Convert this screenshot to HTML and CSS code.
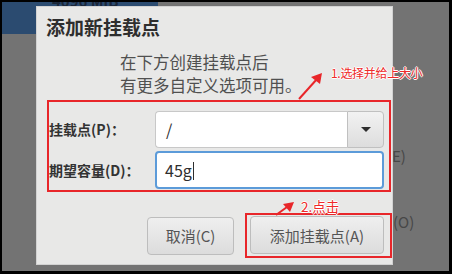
FILE: index.html
```html
<!DOCTYPE html>
<html lang="zh-CN">
<head>
    <meta charset="UTF-8">
    <title>添加新挂载点</title>
    <link rel="stylesheet" href="styles.css">
</head>
<body>
    <div class="screen">
        <div class="bg-panel"><span class="bg-size">4096 MiB</span></div>
        <span class="bg-text bg-e">E)</span>
        <span class="bg-text bg-o">(O)</span>

        <div class="dialog">
            <div class="dialog-title">添加新挂载点</div>
            <div class="dialog-desc">
                在下方创建挂载点后<br>
                有更多自定义选项可用。
            </div>

            <div class="form-box">
                <label class="field-label">挂载点(P)：</label>
                <div class="combo">
                    <div class="combo-entry">/</div>
                    <div class="combo-btn"><span class="caret"></span></div>
                </div>
                <label class="field-label">期望容量(D)：</label>
                <div class="entry focused">45g<span class="cursor"></span></div>
            </div>

            <div class="actions">
                <button class="btn btn-cancel">取消(C)</button>
                <div class="mark-box">
                    <button class="btn btn-add">添加挂载点(A)</button>
                </div>
            </div>
        </div>

        <!-- annotations -->
        <span class="note note-1">1.选择并给上大小</span>
        <span class="note note-2">2.点击</span>
        <svg class="arrows" width="452" height="274" viewBox="0 0 452 274">
            <g stroke="#e8262a" stroke-width="2" fill="#e8262a">
                <line x1="299" y1="99" x2="317" y2="79"/>
                <polygon points="322,73 320,84 311,77" stroke="none"/>
                <line x1="276" y1="215" x2="287" y2="207"/>
                <polygon points="294,202 290,212 283,204" stroke="none"/>
            </g>
        </svg>
    </div>
</body>
</html>
```

FILE: styles.css
```css
body {
    margin: 0;
    background-color: #000;
    font-family: "Noto Sans CJK SC", "Noto Sans", sans-serif;
}
.screen {
    position: relative;
    box-sizing: border-box;
    width: 452px;
    height: 274px;
    border-style: solid;
    border-color: #000;
    border-width: 2px 3px 3px 2px;
    background-color: #737373;
    overflow: hidden;
}
.bg-panel {
    position: absolute;
    left: 0;
    top: 0;
    width: 156px;
    height: 32px;
    background-color: #2b4b70;
}
.bg-size {
    position: absolute;
    left: 50px;
    top: -12px;
    font-size: 15px;
    font-weight: bold;
    color: #1b2638;
}
.bg-text {
    position: absolute;
    font-size: 15px;
    color: #474747;
}
.bg-e {
    left: 390px;
    top: 143px;
}
.bg-o {
    left: 391px;
    top: 209px;
}
.dialog {
    position: absolute;
    left: 34px;
    top: 4px;
    box-sizing: border-box;
    width: 357px;
    height: 259px;
    padding: 5px 0 0 9px;
    background-color: #e8e8e7;
    border: 1px solid #d2d2d2;
}
.dialog-title {
    font-size: 19px;
    font-weight: bold;
    line-height: 30px;
    color: #2e2e2e;
}
.dialog-desc {
    margin: 9px 0 0 74px;
    font-size: 16.5px;
    line-height: 23px;
    color: #505050;
}
.form-box {
    display: grid;
    grid-template-columns: 106px 229px;
    row-gap: 2px;
    align-items: center;
    box-sizing: border-box;
    width: 344px;
    height: 92px;
    margin: 3px 0 0 1px;
    padding: 8px 0 0 0;
    border: 2px solid #e8262a;
}
.field-label {
    font-size: 14px;
    font-weight: bold;
    color: #333;
    white-space: nowrap;
}
.combo {
    display: flex;
    height: 37px;
}
.combo-entry {
    flex: 1;
    box-sizing: border-box;
    padding-left: 10px;
    font-size: 16px;
    line-height: 35px;
    color: #2e2e2e;
    background-color: #fff;
    border: 1px solid #c8c8c8;
    border-right: none;
    border-radius: 4px 0 0 4px;
}
.combo-btn {
    display: flex;
    align-items: center;
    justify-content: center;
    box-sizing: border-box;
    width: 37px;
    background: linear-gradient(#f2f2f2, #dddddd);
    border: 1px solid #c0c0c0;
    border-radius: 0 4px 4px 0;
}
.caret {
    width: 0;
    height: 0;
    border-left: 5px solid transparent;
    border-right: 5px solid transparent;
    border-top: 5px solid #2e2e2e;
}
.entry {
    box-sizing: border-box;
    height: 38px;
    padding-left: 8px;
    font-size: 16px;
    line-height: 34px;
    color: #2e2e2e;
    background-color: #fff;
    border: 1px solid #c8c8c8;
    border-radius: 4px;
}
.entry.focused {
    border: 2px solid #5c9bd9;
}
.cursor {
    display: inline-block;
    width: 1px;
    height: 18px;
    margin-left: 1px;
    vertical-align: -3px;
    background-color: #2e2e2e;
}
.actions {
    display: flex;
    align-items: center;
    margin: 21px 0 0 101px;
}
.btn {
    box-sizing: border-box;
    height: 38px;
    font-family: "Noto Sans CJK SC", "Noto Sans", sans-serif;
    font-size: 15px;
    color: #555;
    background: linear-gradient(#efefef, #dcdcdc);
    border: 1px solid #bdbdbd;
    border-radius: 4px;
}
.btn-cancel {
    width: 88px;
}
.mark-box {
    margin-left: 11px;
    padding: 1px 6px 2px 3px;
    border: 2px solid #e8262a;
}
.btn-add {
    display: block;
    width: 134px;
}
.note {
    position: absolute;
    color: #ee2a2a;
    white-space: nowrap;
    text-shadow: 1px 0 0 #fff, -1px 0 0 #fff, 0 1px 0 #fff, 0 -1px 0 #fff;
}
.note-1 {
    left: 329px;
    top: 62px;
    font-size: 12px;
    letter-spacing: -0.3px;
}
.note-2 {
    left: 299px;
    top: 194px;
    font-size: 13.5px;
}
.arrows {
    position: absolute;
    left: -2px;
    top: -2px;
}
```
